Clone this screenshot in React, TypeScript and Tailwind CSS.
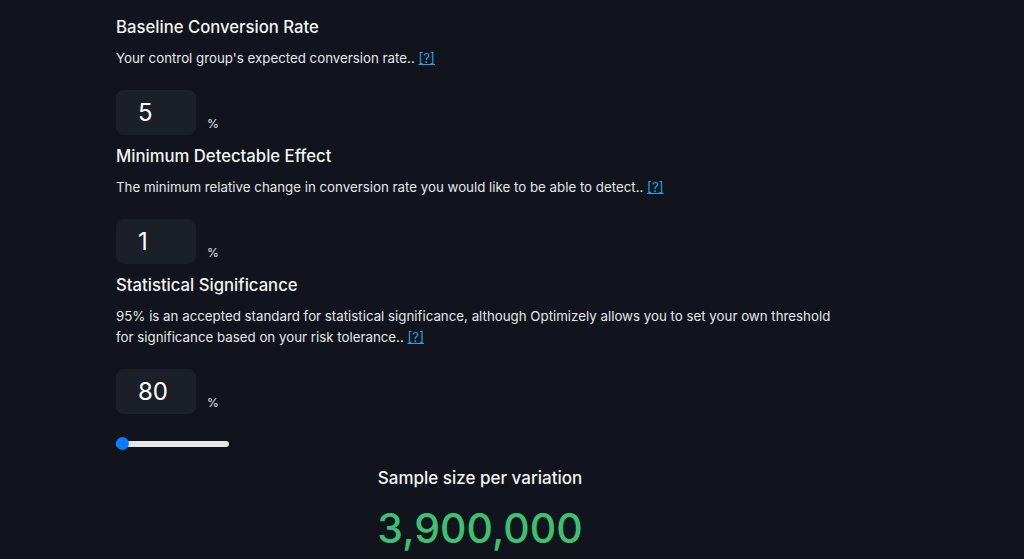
import React from "react";

function Section({ title, desc, value }: { title: string; desc: React.ReactNode; value: string }) {
  return (
    <div className="flex flex-col">
      <h2 className="text-[16.7px] leading-[24px] font-medium text-[#f3f4f6] mt-[9px]">{title}</h2>
      <p className="text-[13.3px] leading-[21px] text-[#e5e7eb] mt-[9px]">{desc}</p>
      <div className="flex items-end mt-[21px]">
        <div className="w-[80px] h-[45px] rounded-[8px] bg-[#1b1f28] flex items-center pl-[22px] text-[24px] text-white">
          {value}
        </div>
        <span className="ml-[11px] mb-[2px] text-[12px] text-[#e5e7eb]">%</span>
      </div>
    </div>
  );
}

function Help() {
  return <a className="text-[#1ea7e0] underline">[?]</a>;
}

export default function App() {
  return (
    <div className="w-[1024px] h-[559px] overflow-hidden bg-[#11141c]" style={{ fontFamily: "Inter, 'Noto Sans', sans-serif" }}>
      <div className="ml-[116px] w-[728px] pt-[6px] flex flex-col">
        <Section
          title="Baseline Conversion Rate"
          desc={<>Your control group's expected conversion rate.. <Help /></>}
          value="5"
        />
        <Section
          title="Minimum Detectable Effect"
          desc={<>The minimum relative change in conversion rate you would like to be able to detect.. <Help /></>}
          value="1"
        />
        <Section
          title="Statistical Significance"
          desc={<>95% is an accepted standard for statistical significance, although Optimizely allows you to set your own threshold for significance based on your risk tolerance.. <Help /></>}
          value="80"
        />
        <div className="relative w-[113px] h-[13px] mt-[23px] flex items-center">
          <div className="w-full h-[6px] rounded-full bg-[#e5e5e5]" />
          <div className="absolute left-0 top-0 w-[13px] h-[13px] rounded-full bg-[#0a7cff]" />
        </div>
        <div className="flex flex-col items-center mt-[16px]">
          <div className="text-[17px] leading-[24px] font-medium text-[#f3f4f6]">Sample size per variation</div>
          <div className="text-[41px] leading-[48px] font-medium text-[#3cc172] mt-[14px]">3,900,000</div>
        </div>
      </div>
    </div>
  );
}
